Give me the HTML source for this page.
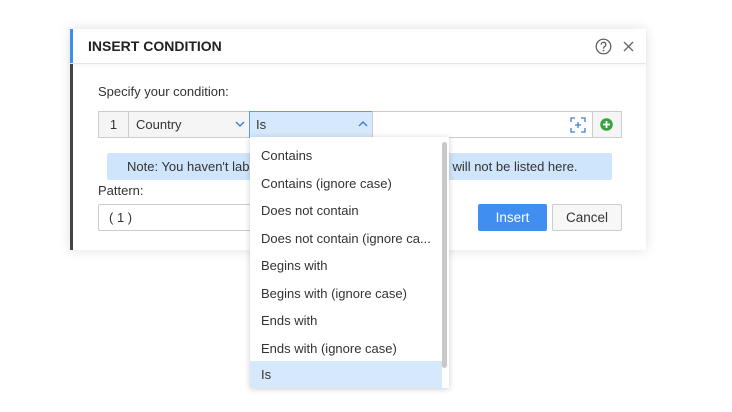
<!DOCTYPE html>
<html><head><style>
*{box-sizing:border-box;margin:0;padding:0}
body{width:732px;height:412px;background:#fff;font-family:"Liberation Sans",sans-serif;font-size:13px;color:#333;position:relative;overflow:hidden}
.abs{position:absolute}
.dlg{left:70px;top:29px;width:576px;height:221px;background:#fff;box-shadow:0 0 12px rgba(0,0,0,.12)}
.hdr{left:0;top:0;width:576px;height:35px;border-bottom:1px solid #e6e6e6;box-shadow:0 2px 3px rgba(0,0,0,.04)}
.t{left:18px;top:9px;font-weight:bold;font-size:14px;color:#222}
.cell{border:1px solid #ccc;background:#f5f5f5;height:27px;line-height:25px}
.dd{left:250px;top:137px;width:199px;height:251px;background:#fff;box-shadow:0 1px 6px rgba(0,0,0,.2)}
.it{position:absolute;left:0;width:192px;height:27.5px;line-height:27px;padding-left:11px;font-size:13px;color:#333;white-space:nowrap;overflow:hidden}
</style></head><body>
<div class="abs dlg">
 <div class="abs" style="left:0;top:0;width:3px;height:35px;background:#3b8ff0"></div>
 <div class="abs" style="left:0;top:35px;width:3px;height:186px;background:#444"></div>
 <div class="abs hdr"></div>
 <div class="abs t">INSERT CONDITION</div>
 <svg class="abs" style="left:525px;top:9px" width="17" height="17" viewBox="0 0 17 17"><circle cx="8.5" cy="8.5" r="7.3" fill="none" stroke="#555" stroke-width="1.2"/><path d="M6.2 6.6a2.3 2.3 0 1 1 3.2 2.1c-.7.3-.9.7-.9 1.4v.5" fill="none" stroke="#555" stroke-width="1.2"/><circle cx="8.5" cy="12.6" r=".8" fill="#555"/></svg>
 <svg class="abs" style="left:553px;top:12px" width="11" height="11"><path d="M1 1L10 10M10 1L1 10" stroke="#666" stroke-width="1.3"/></svg>
 <div class="abs" style="left:28px;top:55px;color:#333">Specify your condition:</div>
</div>
<div class="abs cell" style="left:98px;top:111px;width:31px;text-align:center">1</div>
<div class="abs cell" style="left:128px;top:111px;width:122px;padding-left:7px">Country<svg class="abs" style="left:106px;top:9px" width="10" height="7"><path d="M1 1l4 4 4-4" fill="none" stroke="#3b7fd9" stroke-width="1.4"/></svg></div>
<div class="abs cell" style="left:249px;top:111px;width:124px;padding-left:6px;background:#d6e8fb;border-color:#5c9be6">Is<svg class="abs" style="left:108px;top:8px" width="10" height="7"><path d="M1 6l4-4 4 4" fill="none" stroke="#3b7fd9" stroke-width="1.4"/></svg></div>
<div class="abs cell" style="left:372px;top:111px;width:221px;background:#fff"><svg class="abs" style="left:197px;top:5px" width="16" height="16" viewBox="0 0 16 16"><path d="M1 5V1h4M11 1h4v4M15 11v4h-4M5 15H1v-4" fill="none" stroke="#3b7fd9" stroke-width="1.3"/><path d="M8 5v6M5 8h6" stroke="#3b7fd9" stroke-width="1.3"/></svg></div>
<div class="abs cell" style="left:592px;top:111px;width:30px"><svg class="abs" style="left:7px;top:6px" width="13" height="13"><circle cx="6.5" cy="6.5" r="6.3" fill="#3aa341"/><path d="M6.5 3v7M3 6.5h7" stroke="#fff" stroke-width="1.8"/></svg></div>
<div class="abs" style="left:107px;top:153px;width:505px;height:27px;background:#cfe5fb;border-radius:2px;line-height:27px;padding-left:20px;font-size:13px;white-space:nowrap">Note: You haven't labelled some fields. Unlabelled fields will not be listed here.</div>
<div class="abs" style="left:98px;top:183px">Pattern:</div>
<div class="abs" style="left:98px;top:204px;width:160px;height:27px;border:1px solid #ccc;border-radius:2px;line-height:25px;padding-left:10px">( 1 )</div>
<div class="abs" style="left:478px;top:204px;width:69px;height:27px;background:#3f8ef0;border-radius:2px;color:#fff;text-align:center;line-height:27px;font-size:13.5px">Insert</div>
<div class="abs" style="left:552px;top:204px;width:70px;height:27px;border:1px solid #ccc;background:#f7f7f7;border-radius:2px;text-align:center;line-height:25px;font-size:13.5px">Cancel</div>
<div class="abs dd">
 <div class="it" style="top:5px">Contains</div>
 <div class="it" style="top:32.5px">Contains (ignore case)</div>
 <div class="it" style="top:60px">Does not contain</div>
 <div class="it" style="top:87.5px">Does not contain (ignore ca...</div>
 <div class="it" style="top:115px">Begins with</div>
 <div class="it" style="top:142.5px">Begins with (ignore case)</div>
 <div class="it" style="top:170px">Ends with</div>
 <div class="it" style="top:197.5px">Ends with (ignore case)</div>
 <div class="it" style="top:224px;height:27px;background:#d6e8fb">Is</div>
 <div class="abs" style="left:192px;top:5px;width:5px;height:226px;background:#c8c8c8;border-radius:3px"></div>
</div>
</body></html>
